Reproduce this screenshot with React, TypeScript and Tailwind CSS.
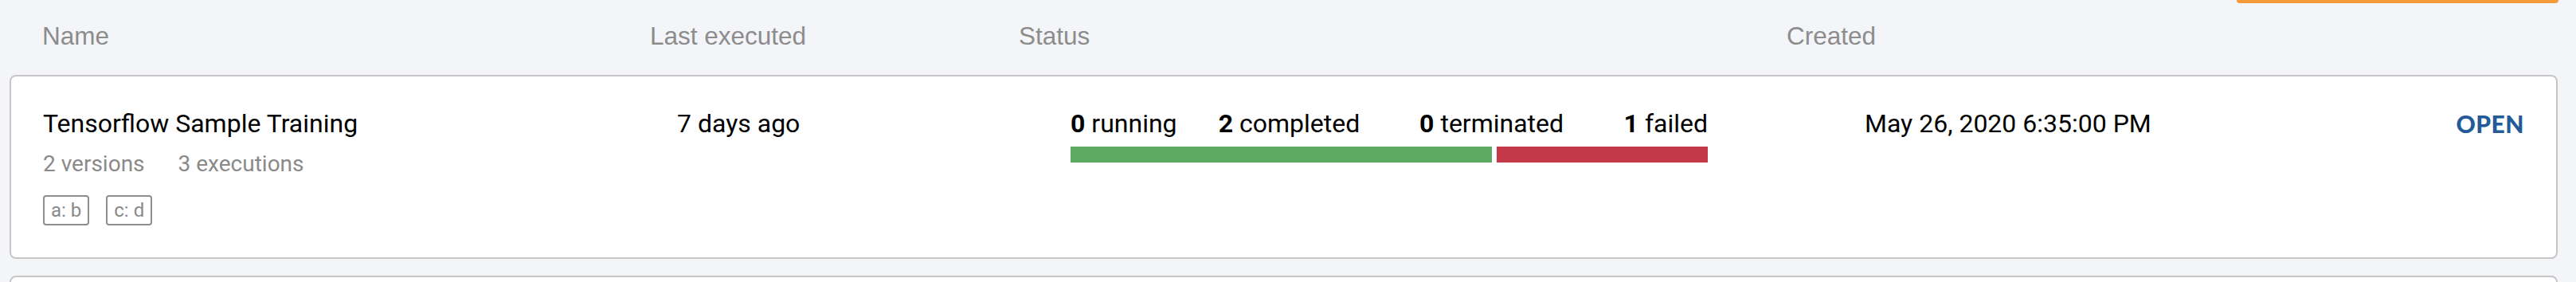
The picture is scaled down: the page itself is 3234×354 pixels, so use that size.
import React from 'react';

const headFont = { fontFamily: '"Liberation Sans", Arial, sans-serif' };
const bodyFont = { fontFamily: 'Roboto, "Noto Sans", sans-serif' };

type Run = {
    name: string;
    versions: number;
    executions: number;
    tags: string[];
    lastExecuted: string;
    running: number;
    completed: number;
    terminated: number;
    failed: number;
    created: string;
};

const runs: Run[] = [
    {
        name: 'Tensorflow Sample Training',
        versions: 2,
        executions: 3,
        tags: ['a: b', 'c: d'],
        lastExecuted: '7 days ago',
        running: 0,
        completed: 2,
        terminated: 0,
        failed: 1,
        created: 'May 26, 2020 6:35:00 PM',
    },
];

const StatusCount: React.FC<{ count: number; label: string; className?: string }> = ({ count, label, className }) => (
    <span className={className}>
        <span className="font-bold">{count}</span> {label}
    </span>
);

const StatusBar: React.FC<{ run: Run }> = ({ run }) => {
    const total = run.running + run.completed + run.terminated + run.failed;
    const parts = [
        { value: run.running, color: 'bg-[#3b82c4]' },
        { value: run.completed, color: 'bg-[#5ca964]' },
        { value: run.terminated, color: 'bg-[#9a9a9a]' },
        { value: run.failed, color: 'bg-[#c4384a]' },
    ].filter((p) => p.value > 0);

    return (
        <div className="w-[800px]">
            <div className="flex text-[32px] leading-[40px] text-black whitespace-nowrap">
                <StatusCount count={run.running} label="running" className="w-[186px]" />
                <StatusCount count={run.completed} label="completed" className="w-[253px]" />
                <StatusCount count={run.terminated} label="terminated" className="w-[257px]" />
                <StatusCount count={run.failed} label="failed" className="ml-auto" />
            </div>
            <div className="mt-[9px] flex h-[20px] gap-[6px]">
                {parts.map((p, i) => (
                    <div key={i} className={`h-full ${p.color}`} style={{ flexGrow: p.value / total, flexBasis: 0 }} />
                ))}
            </div>
        </div>
    );
};

const RunCard: React.FC<{ run: Run }> = ({ run }) => (
    <div className="ml-[12px] mr-[23px] h-[231px] rounded-[8px] border-2 border-[#c6c6c6] bg-white" style={bodyFont}>
        <div className="flex items-start pl-[40px] pr-[40px] pt-[39px]">
            <div className="w-[796px]">
                <div className="text-[32px] leading-[40px] text-black">{run.name}</div>
                <div className="mt-[13px] flex gap-[42px] text-[28px] leading-[36px] text-[#8a8a8a]">
                    <span>{run.versions} versions</span>
                    <span>{run.executions} executions</span>
                </div>
                <div className="mt-[21px] flex gap-[21px]">
                    {run.tags.map((t) => (
                        <span
                            key={t}
                            className="rounded-[4px] border-2 border-[#8e8e8e] px-[8px] text-[24px] leading-[34px] text-[#8a8a8a]"
                        >
                            {t}
                        </span>
                    ))}
                </div>
            </div>
            <div className="w-[494px] text-[32px] leading-[40px] text-black">{run.lastExecuted}</div>
            <StatusBar run={run} />
            <div className="ml-[197px] text-[32px] leading-[40px] text-black whitespace-nowrap">{run.created}</div>
            <button
                className="ml-auto text-[30px] leading-[40px] font-black tracking-[0.5px] text-[#225b97]"
                style={{ fontFamily: 'Lato, "Open Sans", sans-serif' }}
            >
                OPEN
            </button>
        </div>
    </div>
);

export default function App() {
    return (
        <div className="h-[354px] bg-[#f4f5f8] overflow-hidden">
            <div className="flex justify-end">
                <div className="mr-[22px] h-[4px] w-[404px] rounded-b-[6px] bg-[#f59a38]" />
            </div>
            <div className="flex h-[90px] pt-[21px] pl-[53px] text-[31.5px] leading-[40px] text-[#8c8c8c]" style={headFont}>
                <div className="w-[763px]">Name</div>
                <div className="w-[463px]">Last executed</div>
                <div className="w-[964px]">Status</div>
                <div>Created</div>
            </div>
            {runs.map((r) => (
                <RunCard key={r.name} run={r} />
            ))}
            <div className="mt-[21px] ml-[12px] mr-[23px] h-[231px] rounded-[8px] border-2 border-[#c6c6c6] bg-white" />
        </div>
    );
}
